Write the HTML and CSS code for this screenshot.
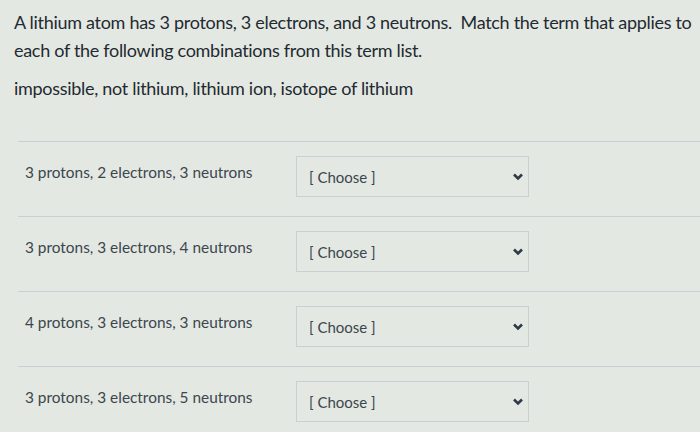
FILE: index.html
```html
<!DOCTYPE html>
<html>
<head>
<meta charset="utf-8">
<link rel="stylesheet" href="styles.css">
</head>
<body>
<div class="page">
  <div class="question">
    <p class="q-text">A lithium atom has 3 protons, 3 electrons, and 3 neutrons.&nbsp; Match the term that applies to each of the following combinations from this term list.</p>
    <p class="q-text terms">impossible, not lithium, lithium ion, isotope of lithium</p>
  </div>
  <div class="rows">
    <div class="row">
      <div class="label">3 protons, 2 electrons, 3 neutrons</div>
      <div class="select"><span>[ Choose ]</span><svg class="chev" viewBox="0 0 12 9" width="12" height="9"><path d="M2 2.5 L6 6.5 L10 2.5" fill="none" stroke="#2d3b45" stroke-width="2.6"/></svg></div>
    </div>
    <div class="row">
      <div class="label">3 protons, 3 electrons, 4 neutrons</div>
      <div class="select"><span>[ Choose ]</span><svg class="chev" viewBox="0 0 12 9" width="12" height="9"><path d="M2 2.5 L6 6.5 L10 2.5" fill="none" stroke="#2d3b45" stroke-width="2.6"/></svg></div>
    </div>
    <div class="row">
      <div class="label">4 protons, 3 electrons, 3 neutrons</div>
      <div class="select"><span>[ Choose ]</span><svg class="chev" viewBox="0 0 12 9" width="12" height="9"><path d="M2 2.5 L6 6.5 L10 2.5" fill="none" stroke="#2d3b45" stroke-width="2.6"/></svg></div>
    </div>
    <div class="row">
      <div class="label">3 protons, 3 electrons, 5 neutrons</div>
      <div class="select"><span>[ Choose ]</span><svg class="chev" viewBox="0 0 12 9" width="12" height="9"><path d="M2 2.5 L6 6.5 L10 2.5" fill="none" stroke="#2d3b45" stroke-width="2.6"/></svg></div>
    </div>
  </div>
</div>
</body>
</html>
```

FILE: styles.css
```css
html, body {
  margin: 0;
  padding: 0;
  background: #e4e8e3;
}
body {
  width: 700px;
  height: 432px;
  overflow: hidden;
  font-family: Lato, "Open Sans", sans-serif;
  color: #2d3b45;
}
.page {
  padding-top: 8px;
}
.question {
  padding-left: 14px;
}
.q-text {
  margin: 0;
  font-size: 18px;
  line-height: 28px;
  letter-spacing: -0.3px;
  color: #1f2a31;
}
.terms {
  margin-top: 10px;
}
.rows {
  margin-top: 39px;
  margin-left: 18px;
}
.row {
  display: flex;
  align-items: flex-start;
  height: 74px;
  border-top: 1px solid #c9cfd2;
}
.label {
  width: 271px;
  padding-left: 7px;
  padding-top: 20px;
  font-size: 15.4px;
  line-height: 20px;
  color: #3b464d;
}
.select {
  margin-top: 14px;
  width: 233px;
  height: 41px;
  border: 1px solid #c9cfd2;
  display: flex;
  align-items: center;
  justify-content: space-between;
  padding: 0 4px 0 12px;
  box-sizing: border-box;
  font-size: 15px;
  color: #3b464d;
}
.select span {
  padding-top: 1px;
}
.chev {
  display: block;
}
```
